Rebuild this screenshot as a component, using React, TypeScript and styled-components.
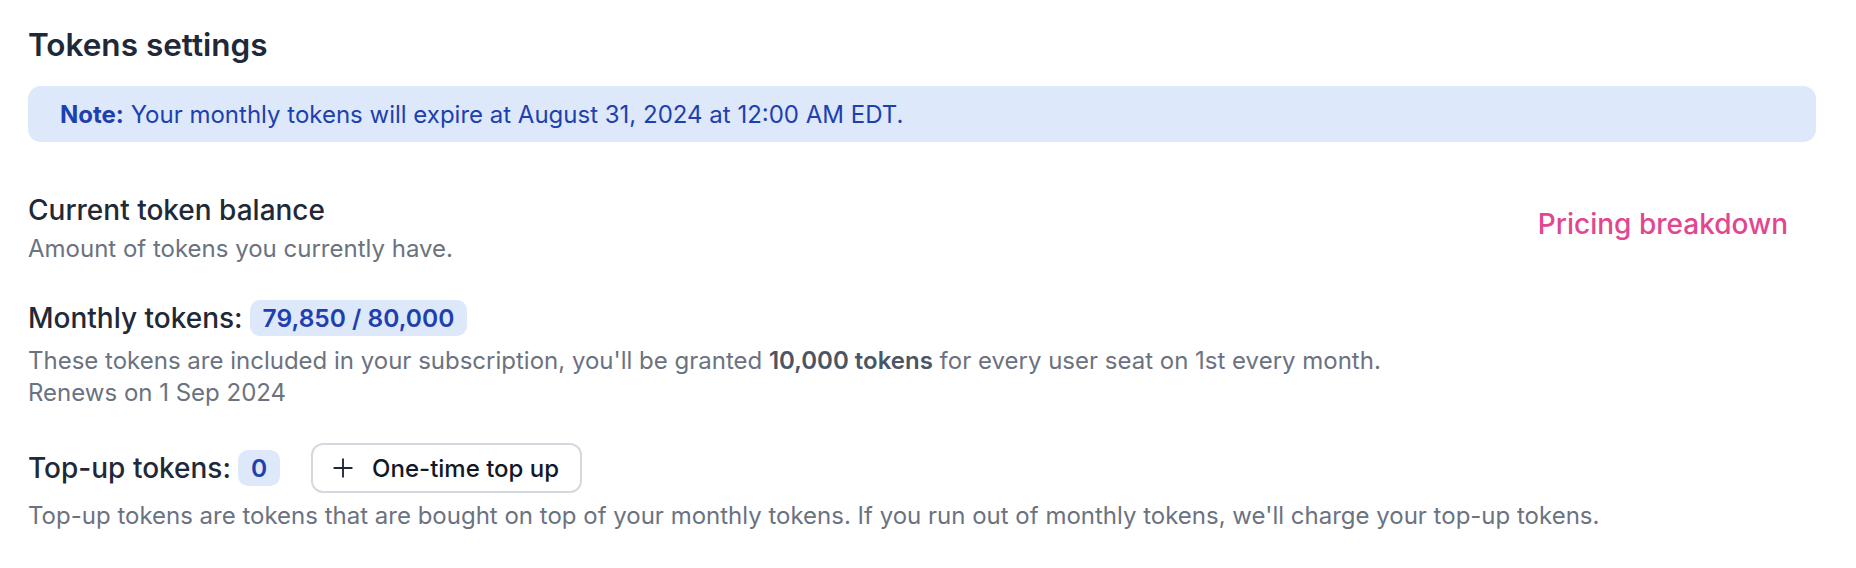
import React from "react";
import styled, { createGlobalStyle } from "styled-components";
import { Plus } from "lucide-react";

const Global = createGlobalStyle`
  html, body { margin: 0; padding: 0; background: #ffffff; }
  body { font-family: Inter, "Noto Sans", "Liberation Sans", sans-serif; -webkit-font-smoothing: antialiased; }
  * { box-sizing: border-box; }
`;

const Page = styled.div`
  padding: 24px 40px 0 28px;
  display: flex;
  flex-direction: column;
`;

const Title = styled.h1`
  margin: 0 0 20px 0;
  font-size: 31.5px;
  line-height: 42px;
  font-weight: 600;
  color: #1f2937;
`;

const Notice = styled.div`
  background: #dde8fb;
  border-radius: 13px;
  padding: 10.5px 32px;
  font-size: 24px;
  line-height: 35px;
  color: #1e40af;
`;

const NoticeLabel = styled.strong`
  font-weight: 700;
`;

const Section = styled.section<{ $top: number }>`
  margin-top: ${(p) => p.$top}px;
  display: flex;
  flex-direction: column;
`;

const SplitRow = styled.div`
  display: flex;
  align-items: center;
  justify-content: space-between;
`;

const HeadRow = styled.div<{ $h: number }>`
  display: flex;
  align-items: center;
  gap: 7px;
  height: ${(p) => p.$h}px;
`;

const Heading = styled.h2`
  margin: 0;
  font-size: 28px;
  line-height: 42px;
  font-weight: 500;
  color: #1f2937;
`;

const Desc = styled.p<{ $top: number }>`
  margin: ${(p) => p.$top}px 0 0 0;
  font-size: 24px;
  line-height: 32px;
  color: #6b7280;
`;

const Em = styled.strong`
  font-weight: 600;
  color: #4b5563;
`;

const Badge = styled.span`
  display: inline-flex;
  align-items: center;
  height: 36px;
  padding: 0 13px;
  border-radius: 10px;
  background: #dde8fb;
  color: #1e40af;
  font-size: 24.5px;
  font-weight: 600;
  line-height: 35px;
`;

const LinkButton = styled.button`
  border: none;
  background: transparent;
  padding: 0 28px;
  margin-bottom: 6px;
  font-family: inherit;
  font-size: 28px;
  line-height: 42px;
  font-weight: 500;
  color: #e1468f;
  cursor: pointer;
`;

const OutlineButton = styled.button`
  margin-left: 24px;
  height: 50px;
  display: inline-flex;
  align-items: center;
  gap: 14px;
  padding: 0 21px 0 15px;
  border: 2px solid #d5d8de;
  border-radius: 12px;
  background: #ffffff;
  font-family: inherit;
  font-size: 24px;
  line-height: 35px;
  font-weight: 500;
  color: #111827;
  cursor: pointer;
  svg { flex: none; color: #1f2937; }
`;

export default function App() {
  return (
    <>
      <Global />
      <Page>
        <Title>Tokens settings</Title>
        <Notice>
          <NoticeLabel>Note:</NoticeLabel> Your monthly tokens will expire at August 31, 2024 at 12:00 AM EDT.
        </Notice>

        <Section $top={47}>
          <SplitRow>
            <div>
              <Heading>Current token balance</Heading>
              <Desc $top={2}>Amount of tokens you currently have.</Desc>
            </div>
            <LinkButton type="button">Pricing breakdown</LinkButton>
          </SplitRow>
        </Section>

        <Section $top={32}>
          <HeadRow $h={42}>
            <Heading>Monthly tokens:</Heading>
            <Badge>79,850 / 80,000</Badge>
          </HeadRow>
          <Desc $top={6}>
            These tokens are included in your subscription, you'll be granted <Em>10,000 tokens</Em> for every user
            seat on 1st every month.
            <br />
            Renews on 1 Sep 2024
          </Desc>
        </Section>

        <Section $top={34}>
          <HeadRow $h={50}>
            <Heading>Top-up tokens:</Heading>
            <Badge>0</Badge>
            <OutlineButton type="button">
              <Plus size={30} strokeWidth={1.5} />
              One-time top up
            </OutlineButton>
          </HeadRow>
          <Desc $top={7}>
            Top-up tokens are tokens that are bought on top of your monthly tokens. If you run out of monthly tokens,
            we'll charge your top-up tokens.
          </Desc>
        </Section>
      </Page>
    </>
  );
}
